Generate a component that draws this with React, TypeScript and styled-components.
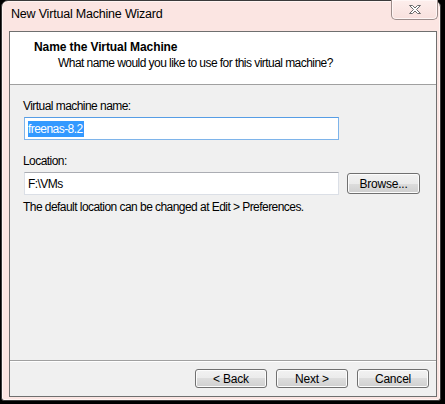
import React from "react";
import styled, { createGlobalStyle } from "styled-components";

const Global = createGlobalStyle`
  html, body {
    margin: 0;
    padding: 0;
    background: #000;
  }
  body {
    font-family: "Liberation Sans", Arial, sans-serif;
    font-size: 12px;
    letter-spacing: -0.55px;
    color: #000;
  }
`;

const Window = styled.div`
  width: 440px;
  height: 401px;
  margin-left: 1px;
  background: #fbe5e2;
  border: 1px solid #3a3a3a;
  border-radius: 7px 7px 3px 3px;
  box-sizing: border-box;
  display: flex;
  flex-direction: column;
  box-shadow: inset 0 0 0 1px #fff4f2;
`;

const TitleBar = styled.div`
  height: 30px;
  display: flex;
  justify-content: space-between;
  align-items: flex-start;
  flex-shrink: 0;
`;

const Title = styled.div`
  padding: 6px 0 0 9px;
  font-size: 12.5px;
  letter-spacing: -0.2px;
  color: #000;
`;

const CloseButton = styled.div`
  width: 45px;
  height: 19px;
  margin-right: 2px;
  margin-top: -1px;
  border: 1px solid #9c8c8a;
  border-top: none;
  border-radius: 0 0 5px 5px;
  background: linear-gradient(#fdeeec, #f8e0dd);
  display: flex;
  align-items: center;
  justify-content: center;
  box-shadow: inset 0 0 0 1px #fff6f5;
`;

const Client = styled.div`
  flex: 1;
  margin: 0 3px 3px 7px;
  border: 1px solid #6f6f6f;
  background: #f0f0f0;
  display: flex;
  flex-direction: column;
`;

const Header = styled.div`
  height: 53px;
  flex-shrink: 0;
  box-sizing: border-box;
  background: #fff;
  border-bottom: 1px solid #a0a0a0;
  padding: 7px 0 0 24px;
`;

const HeaderTitle = styled.div`
  font-weight: bold;
  letter-spacing: -0.1px;
  line-height: 16px;
`;

const HeaderSub = styled.div`
  padding-left: 24px;
  line-height: 16px;
`;

const Body = styled.div`
  flex: 1;
  padding: 14px 0 0 13px;
  display: flex;
  flex-direction: column;
`;

const Label = styled.div<{ gap?: number }>`
  line-height: 15px;
  margin-top: ${(p) => p.gap ?? 0}px;
  margin-bottom: 3px;
`;

const Row = styled.div`
  display: flex;
  align-items: center;
  gap: 8px;
`;

const Field = styled.div<{ focused?: boolean }>`
  width: 315px;
  height: 23px;
  box-sizing: border-box;
  margin-left: 1px;
  background: #fff;
  border: 1px solid ${(p) => (p.focused ? "#7eb4ea" : "#dbdfe6")};
  border-top-color: ${(p) => (p.focused ? "#569de5" : "#abadb3")};
  display: flex;
  align-items: center;
  padding-left: 3px;
`;

const Selected = styled.span`
  background: #3399ff;
  color: #fff;
  line-height: 16px;
  padding-right: 1px;
`;

const Hint = styled.div`
  margin-top: 5px;
  line-height: 15px;
`;

const Footer = styled.div`
  border-top: 1px solid #a0a0a0;
  box-shadow: inset 0 1px 0 #fff;
  height: 36px;
  flex-shrink: 0;
  display: flex;
  justify-content: flex-end;
  align-items: flex-start;
  gap: 9px;
  padding: 8px 7px 0 0;
  box-sizing: border-box;
`;

const Button = styled.div`
  width: 72px;
  height: 19px;
  flex-shrink: 0;
  box-sizing: border-box;
  border: 1px solid #707070;
  border-radius: 3px;
  background: linear-gradient(#f2f2f2 0%, #ebebeb 50%, #dddddd 50%, #cfcfcf 100%);
  box-shadow: inset 0 0 0 1px #fcfcfc;
  display: flex;
  align-items: center;
  justify-content: center;
  line-height: 16px;
  letter-spacing: -0.2px;
`;

const BrowseButton = styled(Button)`
  width: 73px;
  height: 21px;
`;

const CloseGlyph = () => (
  <svg width="14" height="11" viewBox="0 0 14 11">
    <path
      d="M1.5 1.5 H4.5 L7 4 L9.5 1.5 H12.5 L8.5 5.5 L12.5 9.5 H9.5 L7 7 L4.5 9.5 H1.5 L5.5 5.5 Z"
      fill="#fff"
      stroke="#6b6b6b"
      strokeWidth="1"
      strokeLinejoin="round"
    />
  </svg>
);

export default function App() {
  return (
    <>
      <Global />
      <Window>
        <TitleBar>
          <Title>New Virtual Machine Wizard</Title>
          <CloseButton>
            <CloseGlyph />
          </CloseButton>
        </TitleBar>
        <Client>
          <Header>
            <HeaderTitle>Name the Virtual Machine</HeaderTitle>
            <HeaderSub>What name would you like to use for this virtual machine?</HeaderSub>
          </Header>
          <Body>
            <Label>Virtual machine name:</Label>
            <Field focused>
              <Selected>freenas-8.2</Selected>
            </Field>
            <Label gap={14}>Location:</Label>
            <Row>
              <Field>F:\VMs</Field>
              <BrowseButton>Browse...</BrowseButton>
            </Row>
            <Hint>The default location can be changed at Edit &gt; Preferences.</Hint>
          </Body>
          <Footer>
            <Button>&lt; Back</Button>
            <Button>Next &gt;</Button>
            <Button>Cancel</Button>
          </Footer>
        </Client>
      </Window>
    </>
  );
}
